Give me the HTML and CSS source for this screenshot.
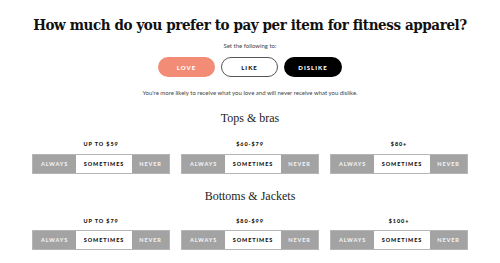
FILE: index.html
```html
<!DOCTYPE html>
<html>
<head>
<meta charset="utf-8">
<link rel="stylesheet" href="styles.css">
</head>
<body>
<main class="page">
  <h1 class="title">How much do you prefer to pay per item for fitness apparel?</h1>
  <p class="sub">Set the following to:</p>
  <div class="legend">
    <span class="pill love">LOVE</span>
    <span class="pill like">LIKE</span>
    <span class="pill dislike">DISLIKE</span>
  </div>
  <p class="note">You're more likely to receive what you love and will never receive what you dislike.</p>

  <h2 class="section">Tops &amp; bras</h2>
  <div class="row">
    <div class="item">
      <div class="label">UP TO $59</div>
      <div class="seg"><span class="opt off">ALWAYS</span><span class="opt on">SOMETIMES</span><span class="opt off">NEVER</span></div>
    </div>
    <div class="item">
      <div class="label">$60-$79</div>
      <div class="seg"><span class="opt off">ALWAYS</span><span class="opt on">SOMETIMES</span><span class="opt off">NEVER</span></div>
    </div>
    <div class="item">
      <div class="label">$80+</div>
      <div class="seg"><span class="opt off">ALWAYS</span><span class="opt on">SOMETIMES</span><span class="opt off">NEVER</span></div>
    </div>
  </div>

  <h2 class="section second">Bottoms &amp; Jackets</h2>
  <div class="row tight">
    <div class="item">
      <div class="label">UP TO $79</div>
      <div class="seg"><span class="opt off">ALWAYS</span><span class="opt on">SOMETIMES</span><span class="opt off">NEVER</span></div>
    </div>
    <div class="item">
      <div class="label">$80-$99</div>
      <div class="seg"><span class="opt off">ALWAYS</span><span class="opt on">SOMETIMES</span><span class="opt off">NEVER</span></div>
    </div>
    <div class="item">
      <div class="label">$100+</div>
      <div class="seg"><span class="opt off">ALWAYS</span><span class="opt on">SOMETIMES</span><span class="opt off">NEVER</span></div>
    </div>
  </div>
</main>
</body>
</html>
```

FILE: styles.css
```css
* { box-sizing: border-box; }
html, body { margin: 0; padding: 0; background: #fff; }
body { width: 500px; height: 263px; overflow: hidden; font-family: "Lato", "Liberation Sans", sans-serif; color: #222; }
.page { display: flex; flex-direction: column; align-items: center; padding-top: 14px; }
.title {
  margin: 0;
  font-family: "DejaVu Serif Condensed", "DejaVu Serif", serif;
  font-stretch: condensed;
  font-weight: 700;
  font-size: 15px;
  line-height: 22px;
  color: #111;
  letter-spacing: -0.4px;
  white-space: nowrap;
}
.sub { margin: 6px 0 0; font-size: 6px; line-height: 8px; color: #444; }
.legend { display: flex; gap: 6px; margin-top: 7px; }
.pill {
  width: 57px; height: 20px; border-radius: 10px;
  display: flex; align-items: center; justify-content: center;
  font-size: 6px; font-weight: 900; letter-spacing: 1px;
}
.love { background: #f38c76; color: #fff; }
.like { background: #fff; color: #111; border: 1px solid #555; }
.dislike { background: #000; color: #fff; width: 58px; }
.note { margin: 12px 0 0; font-size: 6px; line-height: 8px; color: #444; }
.section {
  margin: 14px 0 0;
  font-family: "Liberation Serif", "DejaVu Serif", serif;
  font-weight: 400; font-size: 12px; line-height: 14px; color: #222;
}
.section.second { margin-top: 15px; }
.row { display: flex; gap: 11px; margin-top: 15px; }
.row.tight { margin-top: 14px; }
.item { display: flex; flex-direction: column; align-items: center; }
.label { font-size: 5.5px; font-weight: 900; letter-spacing: 0.9px; line-height: 8px; color: #111; }
.seg {
  margin-top: 6px; display: flex; width: 138px; height: 20px;
  border: 1px solid #b5b5b5;
}
.tight .seg { margin-top: 5px; }
.opt {
  display: flex; align-items: center; justify-content: center;
  font-size: 5.5px; font-weight: 900; letter-spacing: 0.9px;
}
.opt:nth-child(1) { width: 43px; }
.opt:nth-child(2) { width: 56px; }
.opt:nth-child(3) { flex: 1; }
.off { background: #a3a3a3; color: #f2f2f2; }
.on { background: #fff; color: #111; }
```
